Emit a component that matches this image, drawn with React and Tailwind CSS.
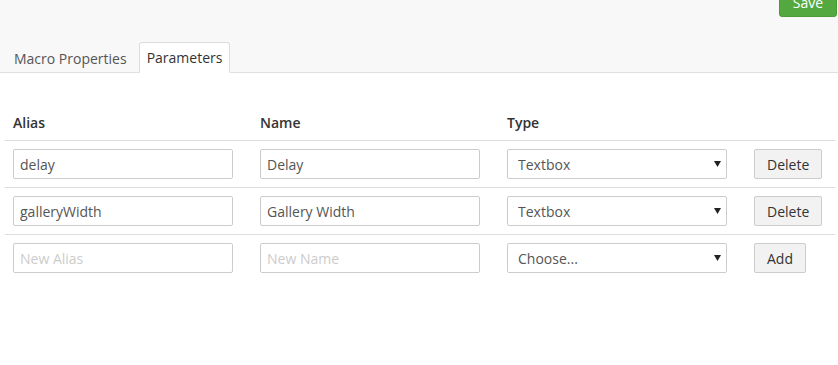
import React from 'react';

const rows = [
  { alias: 'delay', name: 'Delay', type: 'Textbox' },
  { alias: 'galleryWidth', name: 'Gallery Width', type: 'Textbox' },
];

const inputCls =
  'w-[220px] h-[30px] border border-[#cccccc] rounded-[2px] px-[6px] text-[14px] text-[#555555] bg-white outline-none placeholder:text-[#cccccc]';

const SelectBox = ({ value }) => (
  <div className="relative w-[220px] h-[30px]">
    <select
      defaultValue={value}
      className="appearance-none w-full h-full border border-[#cccccc] rounded-[2px] pl-[10px] pr-6 text-[14px] text-[#555555] bg-white outline-none"
    >
      <option>{value}</option>
    </select>
    <svg className="absolute right-[6px] top-[12px] pointer-events-none" width="7" height="6" viewBox="0 0 7 6">
      <path d="M0 0 H7 L3.5 6 Z" fill="#222" />
    </svg>
  </div>
);

const Btn = ({ children }) => (
  <button className="h-[30px] px-3 border border-[#cccccc] rounded-[2px] bg-[#f2f2f2] text-[14px] text-[#333333]">
    {children}
  </button>
);

export default function App() {
  return (
    <div className="w-[838px] h-[365px] bg-white overflow-hidden" style={{ fontFamily: '"Open Sans", "Liberation Sans", sans-serif' }}>
      {/* Header */}
      <div className="h-[73px] bg-[#f8f8f8] border-b border-[#e0e0e0] flex flex-col justify-between">
        <div className="flex justify-end">
          <button className="-mt-[13px] mr-[1px] w-[58px] h-[30px] rounded-[3px] bg-[#53a93f] border border-[#4a9a38] text-white text-[14px]">
            Save
          </button>
        </div>
        <div className="flex items-end ml-[5px] -mb-px">
          <div className="mr-[3px] px-[8px] h-[31px] leading-[31px] border border-transparent text-[14px] text-[#555555]">
            Macro Properties
          </div>
          <div className="px-[7px] h-[31px] leading-[29px] bg-white border border-[#dddddd] border-b-white rounded-t-[3px] text-[14px] text-[#333333]">
            Parameters
          </div>
        </div>
      </div>

      {/* Table */}
      <table className="mt-[32px] ml-[5px] w-[830px] border-collapse text-[14px]">
        <thead>
          <tr>
            <th className="w-[247px] text-left font-semibold text-[#333333] pl-2 pt-2 pb-[7px] leading-5">Alias</th>
            <th className="w-[247px] text-left font-semibold text-[#333333] pl-2 pt-2 pb-[7px] leading-5">Name</th>
            <th className="w-[247px] text-left font-semibold text-[#333333] pl-2 pt-2 pb-[7px] leading-5">Type</th>
            <th className="w-[89px]" />
          </tr>
        </thead>
        <tbody>
          {rows.map((r) => (
            <tr key={r.alias} className="border-t border-[#dddddd]">
              <td className="p-2">
                <input className={inputCls} defaultValue={r.alias} />
              </td>
              <td className="p-2">
                <input className={inputCls} defaultValue={r.name} />
              </td>
              <td className="p-2">
                <SelectBox value={r.type} />
              </td>
              <td className="p-2">
                <Btn>Delete</Btn>
              </td>
            </tr>
          ))}
          <tr className="border-t border-[#dddddd]">
            <td className="p-2">
              <input className={inputCls} placeholder="New Alias" />
            </td>
            <td className="p-2">
              <input className={inputCls} placeholder="New Name" />
            </td>
            <td className="p-2">
              <SelectBox value="Choose..." />
            </td>
            <td className="p-2">
              <Btn>Add</Btn>
            </td>
          </tr>
        </tbody>
      </table>
    </div>
  );
}
